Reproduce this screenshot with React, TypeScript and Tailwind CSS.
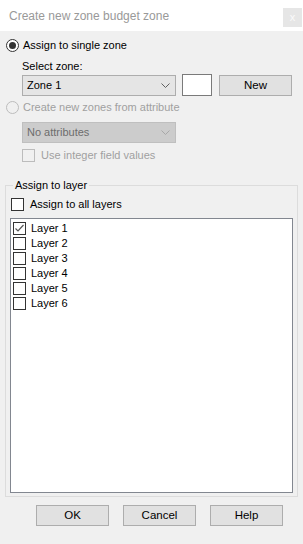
import React from "react";

const font = { fontFamily: '"Liberation Sans", Arial, sans-serif' };

function Radio({ checked, disabled }: { checked?: boolean; disabled?: boolean }) {
  const ring = disabled ? "#bcbcbc" : "#333333";
  return (
    <svg width="13" height="13" viewBox="0 0 13 13" className="shrink-0">
      <circle cx="6.5" cy="6.5" r="6" fill={disabled ? "#f0f0f0" : "#ffffff"} stroke={ring} strokeWidth="1" />
      {checked && <circle cx="6.5" cy="6.5" r="3.5" fill="#333333" />}
    </svg>
  );
}

function Check({ checked, disabled }: { checked?: boolean; disabled?: boolean }) {
  return (
    <svg width="13" height="13" viewBox="0 0 13 13" className="shrink-0">
      <rect x="0.5" y="0.5" width="12" height="12" fill={disabled ? "#f0f0f0" : "#ffffff"} stroke={disabled ? "#bcbcbc" : "#333333"} />
      {checked && <path d="M2.5 6.5 L5 9 L10.5 3" fill="none" stroke="#555555" strokeWidth="1.2" />}
    </svg>
  );
}

function Chevron({ color }: { color: string }) {
  return (
    <svg width="9" height="5" viewBox="0 0 9 5" className="shrink-0">
      <path d="M0.5 0.5 L4.5 4.5 L8.5 0.5" fill="none" stroke={color} strokeWidth="1" />
    </svg>
  );
}

function Button({ label }: { label: string }) {
  return (
    <div className="w-[73px] h-[21px] bg-[#e1e1e1] border border-[#adadad] flex items-center justify-center text-[11.5px] text-black">
      {label}
    </div>
  );
}

const layers = ["Layer 1", "Layer 2", "Layer 3", "Layer 4", "Layer 5", "Layer 6"];

export default function App() {
  return (
    <div className="w-[303px] h-[544px] bg-[#f0f0f0] flex flex-col text-[11px] leading-[15px] text-black overflow-hidden" style={font}>
      {/* Title bar */}
      <div className="h-[31px] bg-white flex items-start shrink-0">
        <p className="pl-[9px] pt-[8px] text-[12px] leading-[16px] text-[#999999] flex-1">Create new zone budget zone</p>
        <div className="mt-[8px] mr-[1px] w-[19px] h-[19px] bg-[#e6e6e6] flex items-center justify-center text-[11px] leading-none text-[#fafafa]">
          x
        </div>
      </div>

      {/* Single zone */}
      <div className="mt-[8px] ml-[6px] h-[13px] flex items-center gap-[4px]">
        <Radio checked />
        <span>Assign to single zone</span>
      </div>
      <p className="mt-[7px] ml-[22px] h-[15px]">Select zone:</p>
      <div className="ml-[22px] h-[22px] flex items-start">
        <div className="mt-[1px] w-[154px] h-[21px] bg-[#e5e5e5] border border-[#adadad] flex items-center pl-[4px] pr-[5px]">
          <span className="flex-1">Zone 1</span>
          <Chevron color="#606060" />
        </div>
        <div className="ml-[6px] w-[30px] h-[22px] bg-white border border-[#7a7a7a]" />
        <div className="ml-[7px] mt-[1px]">
          <Button label="New" />
        </div>
      </div>

      {/* From attribute */}
      <div className="mt-[5px] ml-[6px] h-[13px] flex items-center gap-[4px] text-[#a0a0a0]">
        <Radio disabled />
        <span>Create new zones from attribute</span>
      </div>
      <div className="mt-[8px] ml-[22px] w-[154px] h-[21px] bg-[#cccccc] border border-[#bfbfbf] flex items-center pl-[4px] pr-[5px] text-[#6d6d6d]">
        <span className="flex-1">No attributes</span>
        <Chevron color="#a8a8a8" />
      </div>
      <div className="mt-[6px] ml-[22px] h-[13px] flex items-center gap-[6px] text-[#a0a0a0]">
        <Check disabled />
        <span>Use integer field values</span>
      </div>

      {/* Group box */}
      <div className="relative mt-[23px] ml-[5px] w-[293px] h-[312px] border border-[#dcdcdc] flex flex-col">
        <span className="absolute -top-[8px] left-[7px] bg-[#f0f0f0] px-[2px]">Assign to layer</span>
        <div className="mt-[12px] ml-[5px] h-[13px] flex items-center gap-[6px]">
          <Check />
          <span>Assign to all layers</span>
        </div>
        <div className="mt-[7px] ml-[4px] w-[283px] flex-1 mb-[3px] bg-white border border-[#828790] pt-[2px] pl-[2px]">
          {layers.map((l, i) => (
            <div key={l} className="h-[15px] flex items-center gap-[5px]">
              <Check checked={i === 0} />
              <span>{l}</span>
            </div>
          ))}
        </div>
      </div>

      {/* Buttons */}
      <div className="mt-[8px] ml-[36px] flex gap-[14px]">
        <Button label="OK" />
        <Button label="Cancel" />
        <Button label="Help" />
      </div>
    </div>
  );
}
